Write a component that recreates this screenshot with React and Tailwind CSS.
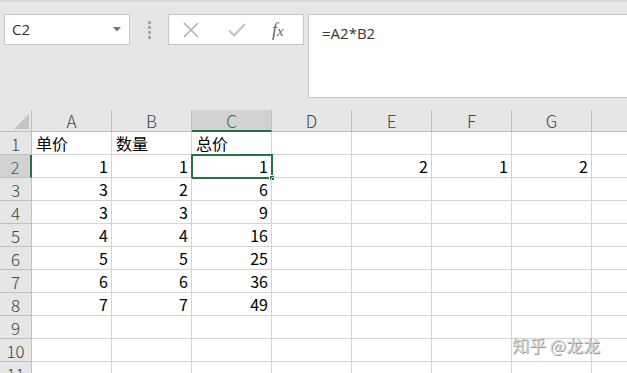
import React from 'react';

const cols = ['A', 'B', 'C', 'D', 'E', 'F', 'G', ''];

// each row: values for A..H (strings), right aligned numbers unless text
const rows = [
  ['单价', '数量', '总价', '', '', '', '', ''],
  ['1', '1', '1', '', '2', '1', '2', ''],
  ['3', '2', '6', '', '', '', '', ''],
  ['3', '3', '9', '', '', '', '', ''],
  ['4', '4', '16', '', '', '', '', ''],
  ['5', '5', '25', '', '', '', '', ''],
  ['6', '6', '36', '', '', '', '', ''],
  ['7', '7', '49', '', '', '', '', ''],
  ['', '', '', '', '', '', '', ''],
  ['', '', '', '', '', '', '', ''],
  ['', '', '', '', '', '', '', ''],
];

const cellFont = { fontFamily: '"Noto Sans CJK SC", "Liberation Sans", sans-serif' };
const uiFont = { fontFamily: '"Open Sans", "Noto Sans", sans-serif' };
const headFont = { fontFamily: '"Noto Sans CJK SC", "Noto Sans", sans-serif', fontWeight: 300 };

function FormulaBar() {
  return (
    <div className="h-[110px] bg-[#e6e6e6] border-t-2 border-[#d9d9d9] flex items-start pt-3 pl-1" style={uiFont}>
      {/* name box */}
      <div className="w-[126px] h-[31px] bg-white border border-[#c6c6c6] flex items-center justify-between pl-[7px] pr-[8px]">
        <span className="text-[15px] text-[#333]">C2</span>
        <svg width="8" height="5" viewBox="0 0 8 5"><path d="M0 0h8L4 4.5z" fill="#777" /></svg>
      </div>
      <div className="w-[38px] h-[31px] flex items-center justify-center">
        <div className="flex flex-col gap-[2px]">
          <span className="w-[3px] h-[3px] bg-[#a8a8a8]" />
          <span className="w-[3px] h-[3px] bg-[#a8a8a8]" />
          <span className="w-[3px] h-[3px] bg-[#a8a8a8]" />
          <span className="w-[3px] h-[3px] bg-[#a8a8a8]" />
        </div>
      </div>
      {/* cancel / enter / fx */}
      <div className="w-[136px] h-[31px] bg-white border border-[#c6c6c6] flex items-center pl-[13px]">
        <svg width="18" height="18" viewBox="0 0 18 18"><path d="M2 2L16 16M16 2L2 16" stroke="#b3b3b3" strokeWidth="1.6" /></svg>
        <svg className="ml-[28px]" width="18" height="16" viewBox="0 0 18 16"><path d="M1 8.5L6 13.5L17 2" stroke="#c4c4c4" strokeWidth="2.2" fill="none" /></svg>
        <span className="ml-[26px] text-[18px] italic text-[#666] leading-none" style={{ fontFamily: '"Liberation Serif", serif' }}>
          f<span className="text-[15px]">x</span>
        </span>
      </div>
      {/* formula input */}
      <div className="ml-[4px] flex-1 h-[84px] bg-white border border-[#c6c6c6] border-r-0 pl-[13px] pt-[6px]">
        <span className="text-[15px] text-[#333]">=A2*B2</span>
      </div>
    </div>
  );
}

export default function App() {
  return (
    <div className="w-[627px] h-[373px] overflow-hidden bg-white relative">
      <FormulaBar />
      <div className="grid grid-cols-[32px_repeat(8,80px)] grid-rows-[22px] auto-rows-[23px]" style={cellFont}>
        {/* corner */}
        <div className="bg-[#e6e6e6] border-r border-b border-[#bfbfbf] flex items-end justify-end pr-[2px] pb-[2px]">
          <svg width="15" height="15" viewBox="0 0 15 15"><path d="M15 0V15H0z" fill="#c4c4c4" /></svg>
        </div>
        {cols.map((c, k) => (
          <div
            key={k}
            className={
              c === 'C'
                ? 'bg-[#d2d2d2] border-r border-[#bfbfbf] border-b-2 border-b-[#217346] flex items-center justify-center text-[17px] text-[#217346] leading-none'
                : 'bg-[#e6e6e6] border-r border-b border-[#bfbfbf] flex items-center justify-center text-[17px] text-[#444] leading-none'
            }
            style={headFont}
          >
            {c}
          </div>
        ))}
        {rows.map((r, i) => (
          <React.Fragment key={i}>
            <div
              className={
                i === 1
                  ? 'bg-[#d2d2d2] border-r-2 border-r-[#217346] border-b border-[#bfbfbf] flex items-center justify-center text-[17px] text-[#217346] leading-none'
                  : 'bg-[#e6e6e6] border-r border-b border-[#bfbfbf] flex items-center justify-center text-[17px] text-[#444] leading-none'
              }
              style={headFont}
            >
              {i + 1}
            </div>
            {r.map((v, j) => {
              const isText = i === 0;
              const selected = i === 1 && j === 2;
              return (
                <div
                  key={j}
                  className={
                    'relative border-r border-b border-[#d4d4d4] flex items-center text-[16px] text-black leading-none ' +
                    (isText ? 'justify-start pl-[4px]' : 'justify-end pr-[3px]')
                  }
                >
                  {v}
                  {selected && (
                    <div className="absolute -left-[1px] -top-[1px] w-[82px] h-[25px] border-2 border-[#217346]">
                      <div className="absolute -right-[4px] -bottom-[4px] w-[6px] h-[6px] bg-[#217346] border border-white" />
                    </div>
                  )}
                </div>
              );
            })}
          </React.Fragment>
        ))}
      </div>
      <div
        className="absolute left-[512px] top-[336px] text-[17px] text-[#d8d8d8] leading-none"
        style={{ ...cellFont, textShadow: '1px 1px 0 #9a9a9a' }}
      >
        知乎 @龙龙
      </div>
    </div>
  );
}
